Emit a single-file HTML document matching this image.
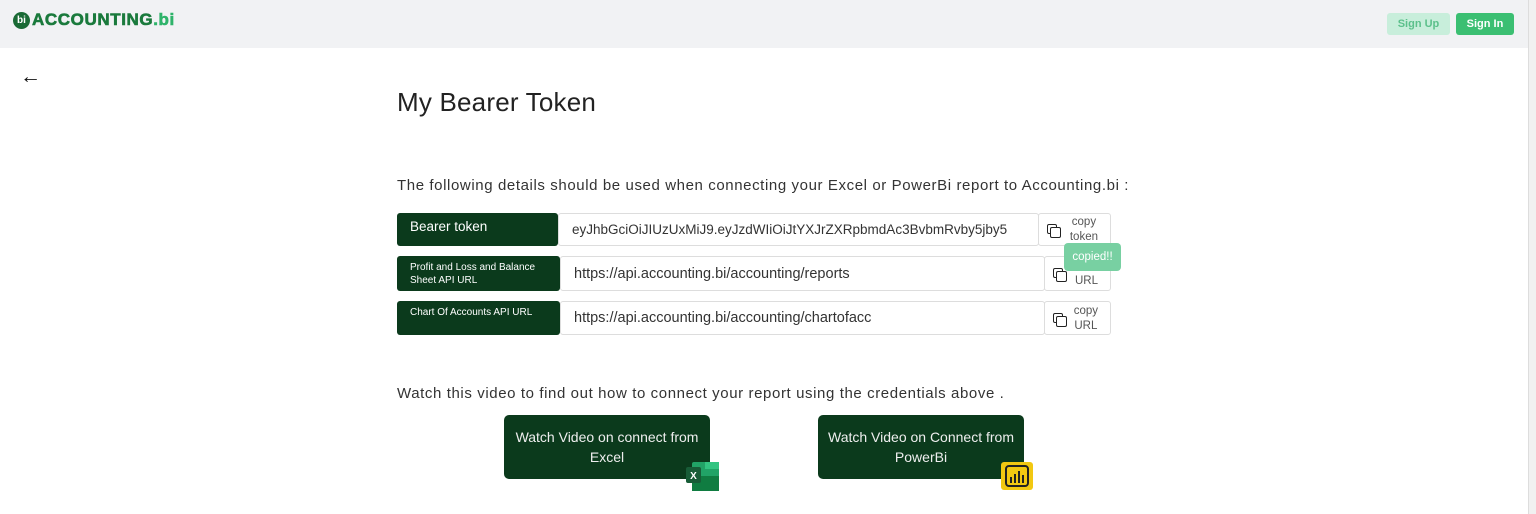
<!DOCTYPE html>
<html><head><style>
*{box-sizing:border-box;margin:0;padding:0}
body{width:1536px;height:514px;overflow:hidden;background:#fff;font-family:"Liberation Sans",sans-serif;color:#333;position:relative}
.hdr{position:absolute;left:0;top:0;width:1528px;height:48px;background:#f1f2f4}
.sb{position:absolute;right:0;top:0;width:8px;height:514px;background:#f1f1f1;border-left:1px solid #ddd}
.abs{position:absolute}
.lbl{position:absolute;left:397px;background:#0b3a1c;color:#fff;border-radius:3px;padding-left:13px}
.inp{position:absolute;border:1px solid #ddd;border-radius:3px;font-size:14.5px;color:#333;padding-left:13px;display:flex;align-items:center;background:#fff;overflow:hidden;white-space:nowrap}
.cp{position:absolute;border:1px solid #ddd;border-radius:3px;font-size:11.5px;color:#555;background:#fff}
.cp .t{position:absolute;right:12px;text-align:center;line-height:15px}
.ic{position:absolute;left:8px;width:10px;height:10px;border:1.6px solid #222;border-radius:2px}
.ic:after{content:"";position:absolute;left:2px;top:2px;width:9px;height:9px;border:1.6px solid #222;border-radius:2px;background:#fff}
.btn{position:absolute;top:415px;width:206px;height:64px;background:#0b3a1c;border-radius:5px;color:#eee;font-size:14px;text-align:center;line-height:20px;padding-top:12px}
</style></head><body>
<div class="hdr"></div>
<div class="sb"></div>
<div class="abs" style="left:13px;top:12px;width:17px;height:17px;border-radius:50%;background:#1a6a35;color:#fff;font-size:10px;font-weight:bold;text-align:center;line-height:17px">bi</div>
<div class="abs" style="left:32px;top:10px;font-size:17px;font-weight:900;color:#1a7a3c;letter-spacing:0.6px;-webkit-text-stroke:0.6px #1a7a3c">ACCOUNTING<span style="color:#2fb36a;-webkit-text-stroke:0.6px #2fb36a">.bi</span></div>
<div class="abs" style="left:1387px;top:13px;width:63px;height:22px;background:#c8eedb;border-radius:3px;color:#5cc08b;font-size:11px;font-weight:bold;text-align:center;line-height:22px">Sign Up</div>
<div class="abs" style="left:1456px;top:13px;width:58px;height:22px;background:#3bbf72;border-radius:3px;color:#fff;font-size:11px;font-weight:bold;text-align:center;line-height:22px">Sign In</div>
<div class="abs" style="left:20px;top:65px;font-size:21px;color:#111;font-weight:bold">&#8592;</div>
<div class="abs" style="left:397px;top:87px;font-size:26px;color:#222;letter-spacing:0.2px">My Bearer Token</div>
<div class="abs" style="left:397px;top:177px;font-size:15px;color:#333;letter-spacing:0.6px">The following details should be used when connecting your Excel or PowerBi report to Accounting.bi :</div>

<div class="lbl" style="top:213px;width:161px;height:33px;font-size:13.5px;padding-top:6px">Bearer token</div>
<div class="inp" style="left:558px;top:213px;width:481px;height:33px;font-size:13.5px">eyJhbGciOiJIUzUxMiJ9.eyJzdWIiOiJtYXJrZXRpbmdAc3BvbmRvby5jby5</div>
<div class="cp" style="left:1038px;top:213px;width:73px;height:33px"><div class="ic" style="top:10px"></div><div class="t" style="top:1px">copy<br>token</div></div>

<div class="lbl" style="top:256px;width:163px;height:35px;font-size:10px;line-height:13px;padding-top:5px">Profit and Loss and Balance<br>Sheet API URL</div>
<div class="inp" style="left:560px;top:256px;width:485px;height:35px">https://api.accounting.bi/accounting/reports</div>
<div class="cp" style="left:1044px;top:256px;width:67px;height:35px"><div class="ic" style="top:11px"></div><div class="t" style="top:17px;right:12px">URL</div></div>
<div class="abs" style="left:1064px;top:243px;width:57px;height:28px;background:#78d0a2;border-radius:4px;color:#fff;font-size:11.5px;text-align:center;line-height:28px">copied!!</div>

<div class="lbl" style="top:301px;width:163px;height:34px;font-size:10px;padding-top:6px">Chart Of Accounts API URL</div>
<div class="inp" style="left:560px;top:301px;width:485px;height:34px">https://api.accounting.bi/accounting/chartofacc</div>
<div class="cp" style="left:1044px;top:301px;width:67px;height:34px"><div class="ic" style="top:11px"></div><div class="t" style="top:2px">copy<br>URL</div></div>

<div class="abs" style="left:397px;top:385px;font-size:15px;color:#333;letter-spacing:0.6px">Watch this video to find out how to connect your report using the credentials above .</div>
<div class="btn" style="left:504px">Watch Video on connect from<br>Excel</div>
<div class="btn" style="left:818px">Watch Video on Connect from<br>PowerBi</div>
<svg class="abs" style="left:686px;top:461px" width="34" height="30" viewBox="0 0 34 30"><rect x="6" y="1" width="27" height="29" rx="2" fill="#21a366"/><rect x="6" y="15" width="27" height="15" fill="#107c41"/><rect x="19" y="1" width="14" height="7" fill="#33c481"/><rect x="0" y="6" width="15" height="16" rx="2" fill="#185c37"/><text x="7.5" y="18" font-size="10" fill="#fff" text-anchor="middle" font-family="Liberation Sans" font-weight="bold">X</text></svg>
<svg class="abs" style="left:1001px;top:462px" width="32" height="28" viewBox="0 0 32 28"><rect width="32" height="28" rx="3" fill="#f2c811"/><rect x="5" y="4" width="22" height="20" rx="3" fill="none" stroke="#222" stroke-width="2"/><rect x="9" y="15" width="2" height="6" fill="#222"/><rect x="13" y="12" width="2" height="9" fill="#222"/><rect x="17" y="9" width="2" height="12" fill="#222"/><rect x="21" y="13" width="2" height="8" fill="#222"/></svg>
</body></html>
